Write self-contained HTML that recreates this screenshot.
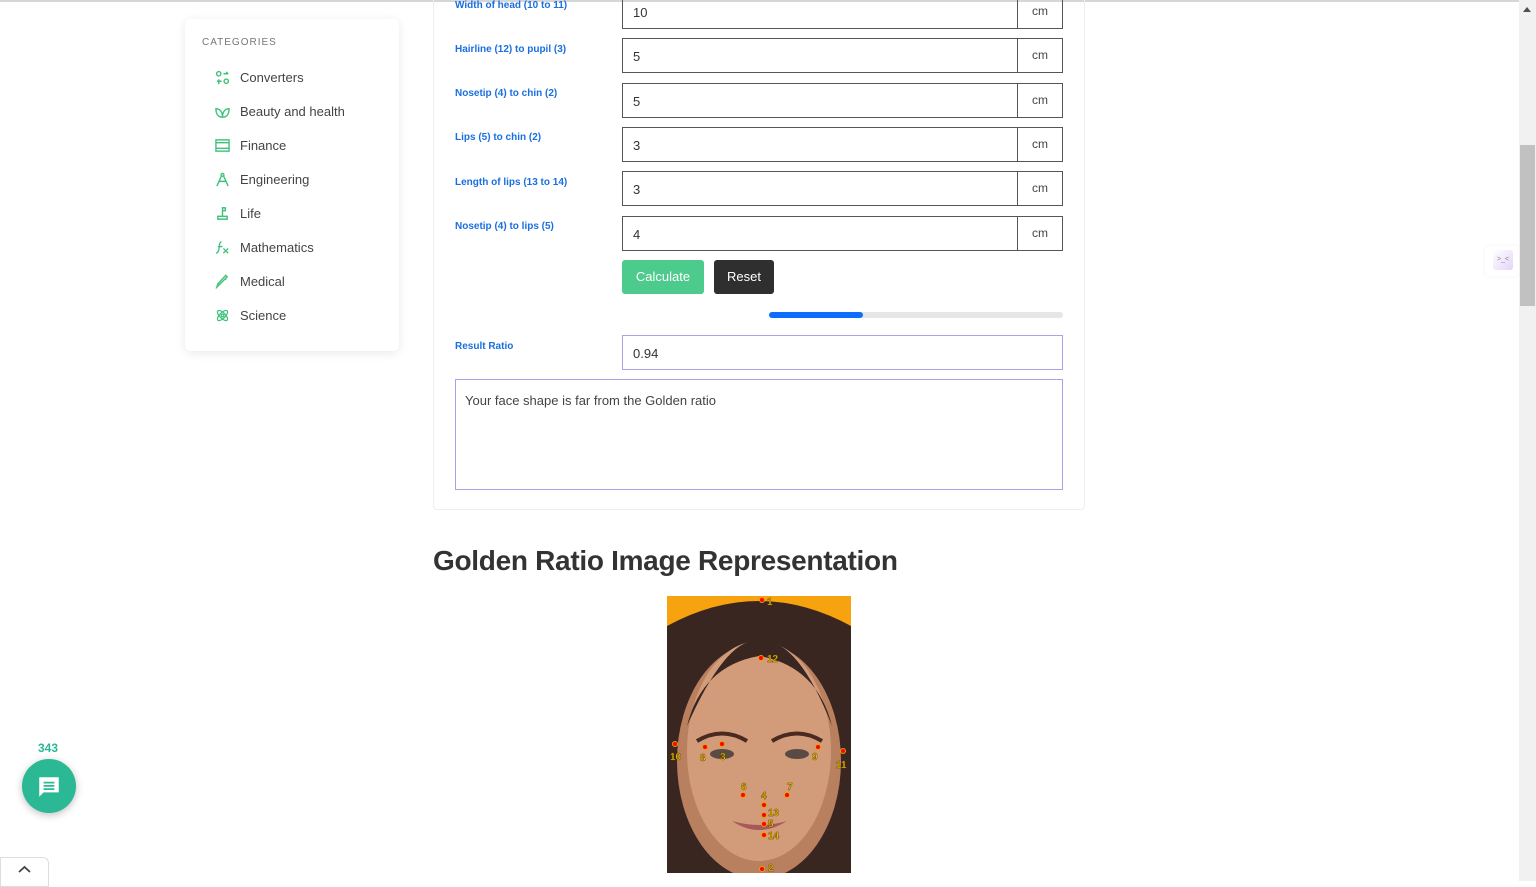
<!DOCTYPE html>
<html><head><meta charset="utf-8"><style>
*{box-sizing:border-box;margin:0;padding:0}
body{width:1536px;height:881px;overflow:hidden;background:#fff;font-family:"Liberation Sans",sans-serif;position:relative}
.topline{position:absolute;left:0;top:0;width:1519px;height:2px;background:#d6d6d6}
.side{position:absolute;left:185px;top:19px;width:214px;height:332px;background:#fff;border-radius:6px;box-shadow:0 2px 10px rgba(0,0,0,.09)}
.side h6{position:absolute;left:17px;top:18px;font-size:10px;font-weight:normal;color:#777;letter-spacing:1px}
.item{position:absolute;left:30px;font-size:13px;color:#444;display:flex;align-items:center}
.item svg{width:15px;height:15px;margin-right:10px}
.card{position:absolute;left:433px;top:-10px;width:652px;height:520px;border:1px solid #eee;border-radius:4px}
.lbl{position:absolute;left:455px;font-size:10px;font-weight:bold;color:#1a6fe0}
.inp{position:absolute;left:622px;width:441px;height:35px;border:1px solid #555;font-size:13px;color:#333}
.inp span{position:absolute;left:10px;top:10px}
.inp b{position:absolute;right:0;top:0;width:45px;height:33px;border-left:1px solid #555;font-weight:normal;font-size:12px;color:#444;text-align:center;line-height:33px}
.btn{position:absolute;top:260px;height:34px;border-radius:3px;color:#fff;font-size:13px;text-align:center;line-height:34px}
h2{position:absolute;left:433px;top:545px;font-size:28px;font-weight:bold;color:#333;letter-spacing:-.3px}
</style></head><body>
<div class="topline"></div>
<div class="side"><h6>CATEGORIES</h6></div>
<div class="item" style="top:70px;left:215px"><svg viewBox="0 0 16 16" fill="none" stroke="#3ec27b" stroke-width="1.5"><circle cx="4" cy="4" r="2.3"/><circle cx="12" cy="12" r="2.3"/><path d="M9 4h5M12 2l2 2M2 12h5M4 10v5"/></svg>Converters</div>
<div class="item" style="top:104px;left:215px"><svg viewBox="0 0 16 16" fill="none" stroke="#3ec27b" stroke-width="1.5"><path d="M8 14C3 14 1 10 1 5c4 0 7 3 7 9zM8 14c5 0 7-4 7-9-4 0-7 3-7 9"/></svg>Beauty and health</div>
<div class="item" style="top:138px;left:215px"><svg viewBox="0 0 16 16" fill="none" stroke="#3ec27b" stroke-width="1.5"><rect x="1" y="2" width="14" height="12"/><path d="M1 5h14M1 11h14"/></svg>Finance</div>
<div class="item" style="top:172px;left:215px"><svg viewBox="0 0 16 16" fill="none" stroke="#3ec27b" stroke-width="1.5"><circle cx="8" cy="3" r="1.5"/><path d="M7 4L2 15M9 4l5 11M4 10h8"/></svg>Engineering</div>
<div class="item" style="top:206px;left:215px"><svg viewBox="0 0 16 16" fill="none" stroke="#3ec27b" stroke-width="1.5"><path d="M8 1v10M8 2h3v3H8M3 11h10v3H3z"/></svg>Life</div>
<div class="item" style="top:240px;left:215px"><svg viewBox="0 0 16 16" fill="none" stroke="#3ec27b" stroke-width="1.4"><path d="M7 2c-2 0-2 2-2.5 6S3 14 1 14M3 7h5M9 9l5 5M14 9l-5 5"/></svg>Mathematics</div>
<div class="item" style="top:274px;left:215px"><svg viewBox="0 0 16 16" fill="none" stroke="#3ec27b" stroke-width="1.5"><path d="M2 14l2-2L13 3l-1.5-1.5L3 10.5 2 14zM11 5l1 1"/></svg>Medical</div>
<div class="item" style="top:308px;left:215px"><svg viewBox="0 0 16 16" fill="none" stroke="#3ec27b" stroke-width="1.3"><circle cx="8" cy="8" r="1.5"/><ellipse cx="8" cy="8" rx="7" ry="3" transform="rotate(45 8 8)"/><ellipse cx="8" cy="8" rx="7" ry="3" transform="rotate(-45 8 8)"/></svg>Science</div>

<div class="card"></div>
<div class="lbl" style="top:0">Width of head (10 to 11)</div>
<div class="inp" style="top:-6px"><span style="top:10px">10</span><b>cm</b></div>
<div class="lbl" style="top:44px">Hairline (12) to pupil (3)</div>
<div class="inp" style="top:38px"><span>5</span><b>cm</b></div>
<div class="lbl" style="top:88px">Nosetip (4) to chin (2)</div>
<div class="inp" style="top:83px"><span>5</span><b>cm</b></div>
<div class="lbl" style="top:132px">Lips (5) to chin (2)</div>
<div class="inp" style="top:127px"><span>3</span><b>cm</b></div>
<div class="lbl" style="top:177px">Length of lips (13 to 14)</div>
<div class="inp" style="top:171px"><span>3</span><b>cm</b></div>
<div class="lbl" style="top:221px">Nosetip (4) to lips (5)</div>
<div class="inp" style="top:216px"><span>4</span><b>cm</b></div>
<div class="btn" style="left:622px;width:82px;background:#4ccb8c">Calculate</div>
<div class="btn" style="left:714px;width:60px;background:#2f2f2f">Reset</div>
<div style="position:absolute;left:769px;top:312px;width:294px;height:6px;border-radius:3px;background:#e6e6e6"><div style="width:94px;height:6px;border-radius:3px;background:#0d6efd"></div></div>
<div class="lbl" style="top:341px">Result Ratio</div>
<div class="inp" style="top:335px;border:1px solid #a9a2e8"><span>0.94</span></div>
<div style="position:absolute;left:455px;top:379px;width:608px;height:111px;border:1px solid #a9a2e8;font-size:13px;color:#444;padding:13px 9px">Your face shape is far from the Golden ratio</div>

<h2>Golden Ratio Image Representation</h2>
<svg style="position:absolute;left:667px;top:596px" width="184" height="277" viewBox="0 0 184 277">
<rect width="184" height="277" fill="#f7a20f"/>
<path d="M0 30Q92-20 184 30V277H0z" fill="#3a2620"/>
<ellipse cx="92" cy="165" rx="82" ry="118" fill="#b98060"/>
<ellipse cx="92" cy="155" rx="72" ry="110" fill="#d29c7a"/>
<path d="M20 130Q60 40 92 45Q130 40 165 130Q150 70 92 60Q35 70 20 130z" fill="#3a2620"/>
<path d="M30 145q25-15 50 0M105 145q25-15 50 0" stroke="#4a2a20" stroke-width="4" fill="none"/>
<ellipse cx="55" cy="158" rx="12" ry="5" fill="#5a4a44"/><ellipse cx="130" cy="158" rx="12" ry="5" fill="#5a4a44"/>
<path d="M65 225q27 18 55 0q-27 8-55 0" fill="#a8585a"/>
<g fill="#f00" stroke="#e0a000" stroke-width="1"><circle cx="95" cy="4" r="2.5"/><circle cx="94" cy="62" r="2.5"/><circle cx="8" cy="148" r="2.5"/><circle cx="38" cy="151" r="2.5"/><circle cx="55" cy="148" r="2.5"/><circle cx="151" cy="151" r="2.5"/><circle cx="176" cy="155" r="2.5"/><circle cx="76" cy="199" r="2.5"/><circle cx="120" cy="199" r="2.5"/><circle cx="97" cy="209" r="2.5"/><circle cx="97" cy="219" r="2.5"/><circle cx="97" cy="228" r="2.5"/><circle cx="97" cy="239" r="2.5"/><circle cx="95" cy="273" r="2.5"/></g>
<g font-size="10" font-weight="bold" fill="#f0c800" stroke="#5a3a00" stroke-width=".4"><text x="100" y="9">1</text><text x="100" y="66">12</text><text x="3" y="164">10</text><text x="33" y="165">8</text><text x="53" y="164">3</text><text x="145" y="164">9</text><text x="169" y="172">11</text><text x="74" y="194">6</text><text x="120" y="194">7</text><text x="94" y="203">4</text><text x="101" y="220">13</text><text x="101" y="231">5</text><text x="101" y="243">14</text><text x="101" y="275">2</text></g>
</svg>

<div style="position:absolute;left:38px;top:741px;font-size:12px;font-weight:bold;color:#2bb894">343</div>
<div style="position:absolute;left:22px;top:759px;width:54px;height:54px;border-radius:50%;background:#2bb894;box-shadow:0 2px 8px rgba(0,0,0,.25)"><svg style="position:absolute;left:14px;top:15px" width="26" height="26" viewBox="0 0 24 24"><path d="M3 3h18v14H7l-4 4z" fill="#fff"/><path d="M7 8h10M7 11h10M7 14h10" stroke="#2bb894" stroke-width="1.6"/></svg></div>
<div style="position:absolute;left:0;top:857px;width:49px;height:30px;border:1px solid #ddd;border-radius:0 6px 0 0;background:#fff"><svg style="position:absolute;left:17px;top:7px" width="13" height="9" viewBox="0 0 13 9"><path d="M1 7l5.5-5 5.5 5" stroke="#444" stroke-width="1.8" fill="none"/></svg></div>
<div style="position:absolute;left:1485px;top:246px;width:34px;height:30px;background:#fff;border-radius:4px;box-shadow:0 0 4px rgba(0,0,0,.05)"><div style="position:absolute;left:8px;top:4px;width:20px;height:20px;border-radius:3px;background:linear-gradient(135deg,#fff,#e4d4f8);font-size:7px;color:#888;text-align:center;line-height:20px">&gt;_&lt;</div></div>
<div style="position:absolute;left:1519px;top:0;width:17px;height:881px;background:#f1f1f1"><div style="position:absolute;left:1px;top:145px;width:15px;height:161px;background:#c1c1c1"></div><div style="position:absolute;left:4px;top:7px;border:4px solid transparent;border-bottom:5px solid #505050;border-top:0"></div></div>
</body></html>
